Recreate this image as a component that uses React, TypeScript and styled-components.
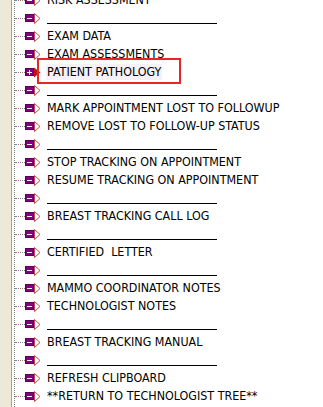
import React from "react";
import styled, { createGlobalStyle } from "styled-components";

const Global = createGlobalStyle`
  html, body { margin: 0; padding: 0; background: #ffffff; }
  body { width: 323px; height: 407px; overflow: hidden; }
`;

const Page = styled.div`
  display: flex;
  width: 323px;
  height: 407px;
  overflow: hidden;
  position: relative;
  background: #ffffff;
  font-family: "DejaVu Sans Condensed", "Liberation Sans", Arial, sans-serif;
  font-stretch: condensed;
`;

const LeftStrip = styled.div`
  width: 11px;
  flex: none;
  background: #ece9d8;
  border-right: 1px solid #a7a496;
`;

const Tree = styled.div`
  margin-left: 2px;
  flex: 1;
  border-left: 1px dotted #808080;
  position: relative;
`;

const List = styled.ul`
  list-style: none;
  margin: -9px 0 0 0;
  padding: 0;
`;

const Row = styled.li`
  display: flex;
  align-items: center;
  height: 18px;
`;

const Connector = styled.span`
  width: 10px;
  flex: none;
  border-top: 1px dotted #808080;
`;

const Box = styled.span<{ plus?: boolean }>`
  width: 9px;
  height: 8px;
  flex: none;
  box-sizing: border-box;
  background: #800080;
  border: 1px solid #5a005a;
  display: flex;
  align-items: center;
  justify-content: center;
  position: relative;
  &::before {
    content: "";
    position: absolute;
    width: 5px;
    height: 1px;
    background: #ffffff;
  }
  &::after {
    content: "";
    position: absolute;
    width: 1px;
    height: ${(p) => (p.plus ? "5px" : "0")};
    background: #ffffff;
  }
`;

const Arrow = styled.svg`
  flex: none;
  width: 7px;
  height: 11px;
`;

const Label = styled.span<{ selected?: boolean }>`
  margin-left: 5px;
  font-size: 12.4px;
  line-height: 16px;
  color: #000000;
  white-space: nowrap;
  padding: 0 1px;
  background: ${(p) => (p.selected ? "#f6f0f7" : "transparent")};
`;

const Blank = styled.span`
  margin-left: 6px;
  width: 170px;
  height: 10px;
  border-bottom: 1px solid #000000;
  align-self: flex-start;
  margin-top: 4px;
`;

const Highlight = styled.div`
  position: absolute;
  left: 22px;
  top: 58px;
  width: 140px;
  height: 22px;
  border: 2px solid #e42828;
  pointer-events: none;
`;

type Item = { text?: string; selected?: boolean };

const items: Item[] = [
  { text: "RISK ASSESSMENT" },
  {},
  { text: "EXAM DATA" },
  { text: "EXAM ASSESSMENTS" },
  { text: "PATIENT PATHOLOGY", selected: true },
  {},
  { text: "MARK APPOINTMENT LOST TO FOLLOWUP" },
  { text: "REMOVE LOST TO FOLLOW-UP STATUS" },
  {},
  { text: "STOP TRACKING ON APPOINTMENT" },
  { text: "RESUME TRACKING ON APPOINTMENT" },
  {},
  { text: "BREAST TRACKING CALL LOG" },
  {},
  { text: "CERTIFIED\u00a0 LETTER" },
  {},
  { text: "MAMMO COORDINATOR NOTES" },
  { text: "TECHNOLOGIST NOTES" },
  {},
  { text: "BREAST TRACKING MANUAL" },
  {},
  { text: "REFRESH CLIPBOARD" },
  { text: "**RETURN TO TECHNOLOGIST TREE**" },
];

function NodeArrow({ filled }: { filled?: boolean }) {
  return (
    <Arrow viewBox="0 0 7 11">
      {filled ? (
        <polygon points="0,0.5 6.5,5.5 0,10.5" fill="#c81010" />
      ) : (
        <polygon points="0.5,0.5 6,5.5 0.5,10.5" fill="none" stroke="#c04848" strokeWidth="1" />
      )}
    </Arrow>
  );
}

export default function App() {
  return (
    <Page>
      <Global />
      <LeftStrip />
      <Tree>
        <List>
          {items.map((it, i) => (
            <Row key={i}>
              <Connector />
              <Box plus={it.selected} />
              <NodeArrow filled={it.selected} />
              {it.text ? <Label selected={it.selected}>{it.text}</Label> : <Blank />}
            </Row>
          ))}
        </List>
        <Highlight />
      </Tree>
    </Page>
  );
}
